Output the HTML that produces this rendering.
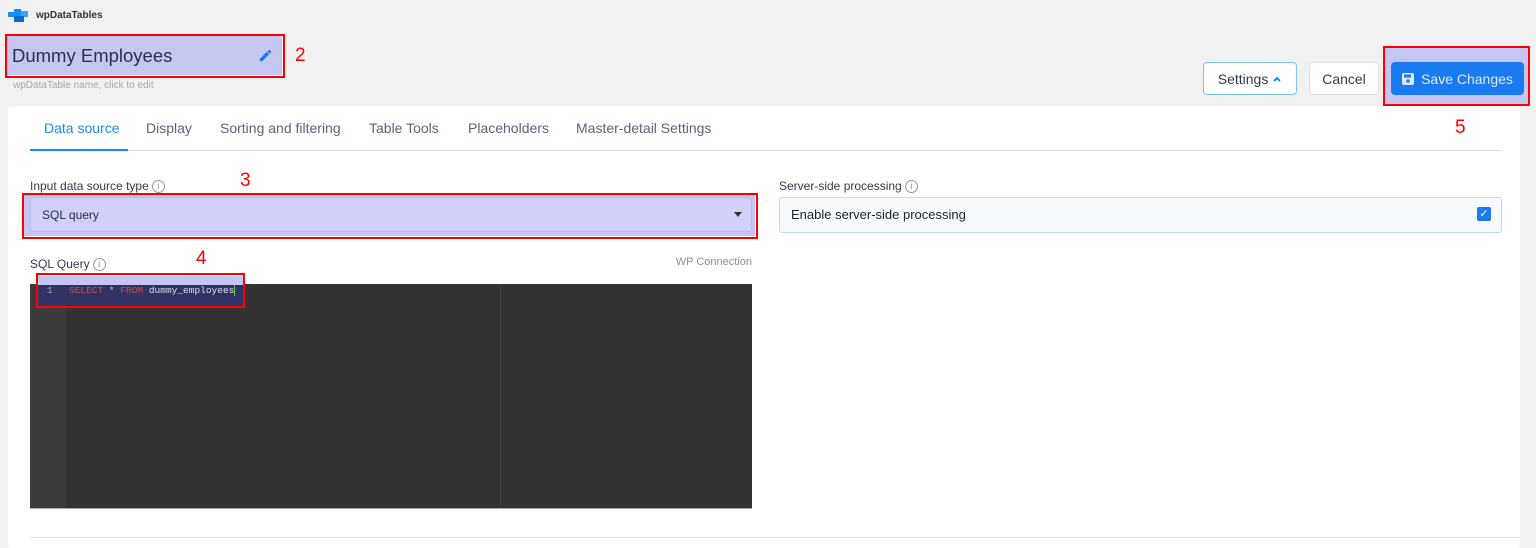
<!DOCTYPE html>
<html><head><style>
body{margin:0;width:1536px;height:548px;background:#f1f1f1;font-family:"Liberation Sans",sans-serif;position:relative;overflow:hidden}
.a{position:absolute}
.red{position:absolute;border:2px solid #f00;box-sizing:border-box}
.num{position:absolute;color:#f00;font-size:19px}
.btn{position:absolute;box-sizing:border-box;border-radius:4px;font-size:14px;display:flex;align-items:center;justify-content:center}
.tab{position:absolute;top:120px;font-size:14px;color:#5b6478}
.lbl{position:absolute;font-size:12px;color:#333a4a}
.i{display:inline-block;width:11px;height:11px;border:1px solid #999;border-radius:50%;font-size:9px;text-align:center;line-height:11px;color:#888;vertical-align:middle;margin-left:3px}
</style></head><body>
<svg class="a" style="left:8px;top:9px" width="22" height="14"><rect x="0" y="3" width="6" height="5" fill="#1c8cf0"/><rect x="6" y="0" width="7" height="7" fill="#1c8cf0"/><rect x="13" y="2" width="7" height="6" fill="#3aa8ff"/><rect x="6" y="7" width="10" height="6" fill="#0a6ad0"/></svg>
<div class="a" style="left:36px;top:10px;font-size:10px;font-weight:bold;color:#333">wpDataTables</div>
<div class="a" style="left:7px;top:36px;width:275px;height:39px;background:#c6c6f2"></div>
<div class="red" style="left:5px;top:34px;width:280px;height:44px"></div>
<div class="a" style="left:12px;top:45px;font-size:18.5px;color:#2a2f55">Dummy Employees</div>
<svg class="a" style="left:258px;top:48px" width="15" height="15" viewBox="0 0 24 24"><path d="M3 17.25V21h3.75L17.8 9.94l-3.75-3.75L3 17.25zM20.7 7.04a1 1 0 000-1.41l-2.34-2.34a1 1 0 00-1.41 0l-1.83 1.83 3.75 3.75 1.83-1.83z" fill="#1a73e8"/></svg>
<div class="num" style="left:295px;top:45px">2</div>
<div class="a" style="left:13px;top:80px;font-size:10px;color:#a5a9b3">wpDataTable name, click to edit</div>

<div class="btn" style="left:1203px;top:62px;width:94px;height:33px;background:#fff;border:1px solid #7cc2f5;color:#333a4a">Settings&nbsp;<svg width="10" height="8" viewBox="0 0 10 8"><path d="M2 6L5 3L8 6" stroke="#1c8cf0" stroke-width="2" fill="none"/></svg></div>
<div class="btn" style="left:1309px;top:62px;width:70px;height:33px;background:#fff;border:1px solid #ddd;color:#333a4a">Cancel</div>
<div class="a" style="left:1385px;top:48px;width:143px;height:56px;background:#c6c6f2"></div>
<div class="red" style="left:1383px;top:46px;width:147px;height:60px"></div>
<div class="btn" style="left:1391px;top:62px;width:133px;height:33px;background:#1a7af0;color:#dde8ff"><svg width="12" height="12" viewBox="0 0 12 12" style="margin-right:7px"><rect x="0" y="0" width="12" height="12" rx="2" fill="#dde8ff"/><rect x="2" y="1.5" width="7" height="3" fill="#1a7af0"/><circle cx="6" cy="8" r="1.8" fill="#1a7af0"/></svg>Save Changes</div>

<div class="a" style="left:8px;top:106px;width:1512px;height:442px;background:#fff;border-radius:3px"></div>
<div class="num" style="left:1455px;top:117px">5</div>
<div class="tab" style="left:44px;color:#1c8cf0">Data source</div>
<div class="tab" style="left:146px">Display</div>
<div class="tab" style="left:220px">Sorting and filtering</div>
<div class="tab" style="left:369px">Table Tools</div>
<div class="tab" style="left:468px">Placeholders</div>
<div class="tab" style="left:576px">Master-detail Settings</div>
<div class="a" style="left:30px;top:150px;width:1472px;height:1px;background:#dde0e6"></div>
<div class="a" style="left:30px;top:149px;width:98px;height:2px;background:#1c8cf0"></div>

<div class="lbl" style="left:30px;top:179px">Input data source type<span class="i">i</span></div>
<div class="num" style="left:240px;top:170px">3</div>
<div class="a" style="left:24px;top:195px;width:731px;height:41px;background:#c6c6f2"></div>
<div class="a" style="left:30px;top:197px;width:722px;height:35px;background:#d0d0fa;border:1px solid #bbbbe6;box-sizing:border-box;border-radius:3px"></div>
<div class="red" style="left:22px;top:193px;width:736px;height:46px"></div>
<div class="a" style="left:42px;top:208px;font-size:12px;color:#2a2f50">SQL query</div>
<div class="a" style="left:734px;top:212px;border-left:4px solid transparent;border-right:4px solid transparent;border-top:5px solid #333"></div>

<div class="lbl" style="left:779px;top:179px">Server-side processing<span class="i">i</span></div>
<div class="a" style="left:779px;top:197px;width:723px;height:36px;background:#f7fbff;border:1px solid #bcdcf5;box-sizing:border-box;border-radius:3px"></div>
<div class="a" style="left:791px;top:207px;font-size:13px;color:#222">Enable server-side processing</div>
<div class="a" style="left:1477px;top:207px;width:14px;height:14px;background:#1a7af0;border-radius:2px;color:#fff;font-size:11px;text-align:center;line-height:14px">&#10003;</div>

<div class="lbl" style="left:30px;top:257px">SQL Query<span class="i">i</span></div>
<div class="a" style="left:668px;top:256px;width:84px;text-align:right;font-size:11px;color:#8a8f99">WP Connection</div>
<div class="num" style="left:196px;top:248px">4</div>
<div class="a" style="left:30px;top:284px;width:722px;height:224px;background:#333;border-bottom:1px solid #aaa"></div>
<div class="a" style="left:30px;top:284px;width:36px;height:224px;background:#3b3b3b"></div>
<div class="a" style="left:500px;top:284px;width:1px;height:224px;background:#3e3e3e"></div>
<div class="a" style="left:38px;top:276px;width:205px;height:30px;background:rgba(50,50,110,0.85)"></div>
<div class="a" style="left:38px;top:276px;width:205px;height:9px;background:#c6c6f2"></div>
<div class="red" style="left:36px;top:273px;width:209px;height:35px"></div>
<div class="a" style="left:47px;top:285px;font-family:'Liberation Mono',monospace;font-size:9.5px;color:#aaa">1</div>
<div class="a" style="left:69px;top:285px;font-family:'Liberation Mono',monospace;font-size:9.5px;color:#c0504d">SELECT <span style="color:#bbb">*</span> FROM <span style="color:#dde">dummy_employees</span><span style="border-left:1px solid #4c4"></span></div>
<div class="a" style="left:30px;top:537px;width:1490px;height:1px;background:#e4e4e4"></div>
</body></html>
